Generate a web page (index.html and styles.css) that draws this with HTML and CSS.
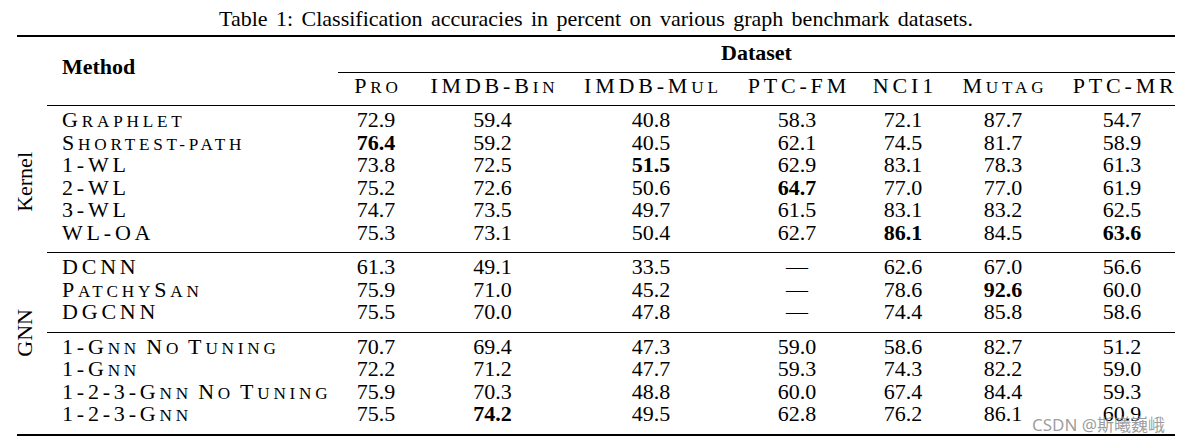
FILE: index.html
```html
<!DOCTYPE html>
<html lang="en">
<head>
<meta charset="utf-8">
<title>Table 1</title>
<link rel="stylesheet" href="styles.css">
</head>
<body>
<div class="page">
  <div class="caption">Table 1: Classification accuracies in percent on various graph benchmark datasets.</div>
  <div class="tbl">
    <div class="toprule"></div>
    <div class="method-h">Method</div>
    <div class="dataset">Dataset</div>
    <div class="cmid"></div>
    <div class="h first">P<span class="sc">ro</span></div>
    <div class="h">IMDB-B<span class="sc">in</span></div>
    <div class="h">IMDB-M<span class="sc">ul</span></div>
    <div class="h">PTC-FM</div>
    <div class="h">NCI1</div>
    <div class="h">M<span class="sc">utag</span></div>
    <div class="h last">PTC-MR</div>
    <div class="midrule"></div>

    <div class="grp grp-kernel">Kernel</div>
    <div class="m">G<span class="sc">raphlet</span></div><div class="n">72.9</div><div class="n">59.4</div><div class="n">40.8</div><div class="n">58.3</div><div class="n">72.1</div><div class="n">87.7</div><div class="n last">54.7</div>
    <div class="m">S<span class="sc">hortest-path</span></div><div class="n b">76.4</div><div class="n">59.2</div><div class="n">40.5</div><div class="n">62.1</div><div class="n">74.5</div><div class="n">81.7</div><div class="n last">58.9</div>
    <div class="m">1-WL</div><div class="n">73.8</div><div class="n">72.5</div><div class="n b">51.5</div><div class="n">62.9</div><div class="n">83.1</div><div class="n">78.3</div><div class="n last">61.3</div>
    <div class="m">2-WL</div><div class="n">75.2</div><div class="n">72.6</div><div class="n">50.6</div><div class="n b">64.7</div><div class="n">77.0</div><div class="n">77.0</div><div class="n last">61.9</div>
    <div class="m">3-WL</div><div class="n">74.7</div><div class="n">73.5</div><div class="n">49.7</div><div class="n">61.5</div><div class="n">83.1</div><div class="n">83.2</div><div class="n last">62.5</div>
    <div class="m">WL-OA</div><div class="n">75.3</div><div class="n">73.1</div><div class="n">50.4</div><div class="n">62.7</div><div class="n b">86.1</div><div class="n">84.5</div><div class="n b last">63.6</div>
    <div class="midrule"></div>

    <div class="grp grp-gnn">GNN</div>
    <div class="m">DCNN</div><div class="n">61.3</div><div class="n">49.1</div><div class="n">33.5</div><div class="n">—</div><div class="n">62.6</div><div class="n">67.0</div><div class="n last">56.6</div>
    <div class="m">P<span class="sc">atchy</span>S<span class="sc">an</span></div><div class="n">75.9</div><div class="n">71.0</div><div class="n">45.2</div><div class="n">—</div><div class="n">78.6</div><div class="n b">92.6</div><div class="n last">60.0</div>
    <div class="m">DGCNN</div><div class="n">75.5</div><div class="n">70.0</div><div class="n">47.8</div><div class="n">—</div><div class="n">74.4</div><div class="n">85.8</div><div class="n last">58.6</div>
    <div class="midrule"></div>
    <div class="m">1-G<span class="sc">nn</span> N<span class="sc">o</span> T<span class="sc">uning</span></div><div class="n">70.7</div><div class="n">69.4</div><div class="n">47.3</div><div class="n">59.0</div><div class="n">58.6</div><div class="n">82.7</div><div class="n last">51.2</div>
    <div class="m">1-G<span class="sc">nn</span></div><div class="n">72.2</div><div class="n">71.2</div><div class="n">47.7</div><div class="n">59.3</div><div class="n">74.3</div><div class="n">82.2</div><div class="n last">59.0</div>
    <div class="m">1-2-3-G<span class="sc">nn</span> N<span class="sc">o</span> T<span class="sc">uning</span></div><div class="n">75.9</div><div class="n">70.3</div><div class="n">48.8</div><div class="n">60.0</div><div class="n">67.4</div><div class="n">84.4</div><div class="n last">59.3</div>
    <div class="m">1-2-3-G<span class="sc">nn</span></div><div class="n">75.5</div><div class="n b">74.2</div><div class="n">49.5</div><div class="n">62.8</div><div class="n">76.2</div><div class="n">86.1</div><div class="n last">60.9</div>
    <div class="botrule"></div>
  </div>
</div>
<div class="wm">CSDN @斯曦巍峨</div>
</body>
</html>
```
FILE: styles.css
```css
html, body {
  margin: 0;
  padding: 0;
  background: #ffffff;
}

.page {
  width: 1158px;
  padding: 8px 0 0 17px;
  font-family: "Liberation Serif", "Times New Roman", serif;
  color: #000;
}

.caption {
  font-size: 22px;
  line-height: 22.5px;
  word-spacing: 2.9px;
  text-align: center;
  margin-bottom: 4.5px;
}

.tbl {
  display: grid;
  grid-template-columns: 30px 291px 76px 157px 160px 132px 80px 120px 112px;
  font-size: 22px;
  line-height: 22.5px;
}

.toprule {
  grid-column: 1 / -1;
  height: 2px;
  background: #000;
}

.botrule {
  grid-column: 1 / -1;
  height: 2px;
  background: #000;
  margin-top: 8px;
}

.midrule {
  grid-column: 2 / -1;
  height: 1px;
  background: #000;
  margin: 8px 0 3px;
}

.cmid {
  grid-column: 3 / -1;
  height: 1px;
  background: #000;
  margin: 7px 0 2px;
}

.method-h {
  grid-column: 2;
  grid-row: span 3;
  font-weight: bold;
  padding: 19px 0 0 15px;
}

.dataset {
  grid-column: 3 / -1;
  text-align: center;
  font-weight: bold;
  margin-top: 5px;
}

.h {
  text-align: center;
  letter-spacing: 3.8px;
  padding-left: 3.8px;
  white-space: nowrap;
}

.h.first {
  grid-column-start: 3;
}

.m {
  grid-column: 2;
  padding-left: 15px;
  letter-spacing: 3.8px;
  word-spacing: -3px;
  white-space: nowrap;
}

.sc {
  font-size: 0.78em;
  line-height: 1;
  text-transform: uppercase;
}

.n {
  text-align: center;
}

.b {
  font-weight: bold;
}

.last {
  padding-left: 6px;
}

.h.last {
  padding-left: 9.8px;
}

.grp {
  grid-column: 1;
  writing-mode: vertical-rl;
  transform: rotate(180deg);
  justify-self: start;
  align-self: center;
  margin-left: -3px;
  line-height: 22.5px;
  white-space: nowrap;
}

.grp-kernel {
  grid-row: span 6;
  margin-top: 10px;
}

.grp-gnn {
  grid-row: span 8;
  margin-bottom: 15px;
}

.wm {
  position: absolute;
  left: 1032px;
  top: 414px;
  font-family: "Noto Sans", "Noto Sans CJK SC", sans-serif;
  font-size: 17px;
  line-height: 22px;
  color: rgba(140, 140, 140, 0.85);
  white-space: nowrap;
}
```
